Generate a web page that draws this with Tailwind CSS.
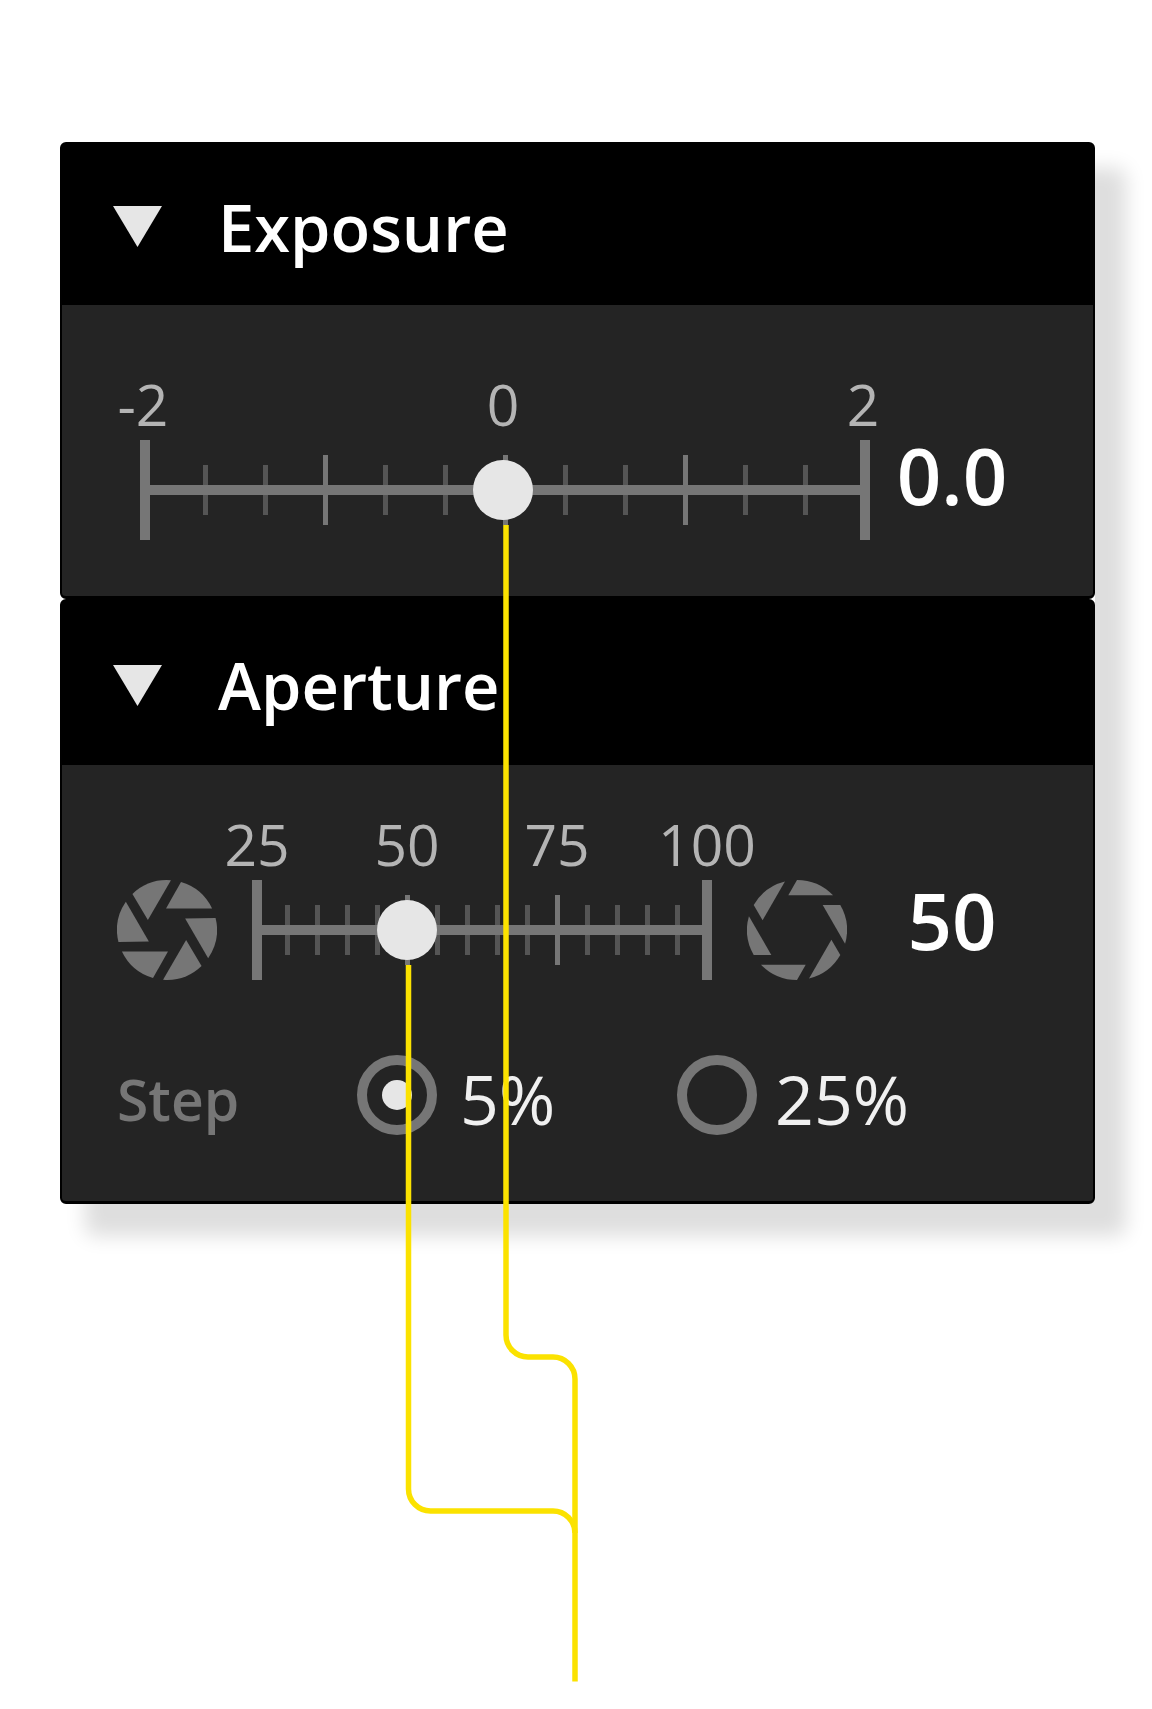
<!DOCTYPE html>
<html lang="en">
<head>
  <meta charset="UTF-8" />
  <title>Exposure and Aperture</title>
  <meta name="viewport" content="width=device-width, initial-scale=1.0">
  <script src="https://cdn.jsdelivr.net/npm/@tailwindcss/browser@4"></script>
</head>
<body class="bg-white font-['Open_Sans','Noto_Sans',sans-serif]">
  <main class="relative min-h-[1709px] pt-[142px] pl-[60px] pr-[57px]">

    <div class="rounded-md shadow-[28px_29px_20px_3px_#dedede]">

      <!-- Exposure -->
      <section class="border-2 border-b-3 border-black rounded-md bg-[#242424]">
        <h2>
          <button type="button" aria-expanded="true" class="flex items-center gap-[56px] w-full h-[161px] pt-1 pl-[51px] bg-black text-white text-[65px] leading-[80px] font-semibold">
            <svg class="w-[49px] h-[41px]" viewBox="0 0 49 41" aria-hidden="true"><path d="M0 0H49L24.500 41Z" fill="#e6e6e6"/></svg>
            Exposure
          </button>
        </h2>
        <div class="flex items-end gap-6 pt-[67px] pb-[56px] pl-[78px] pr-[83px]">
          <div class="flex-1">
            <div class="flex justify-between mb-1 mr-1 text-[57px] leading-[64px] text-[#b4b4b4]">
              <span class="w-1.5 flex justify-center">-2</span>
              <span class="w-1.5 flex justify-center">0</span>
              <span class="w-1.5 flex justify-center">2</span>
            </div>
            <div class="relative h-[100px]">
              <div id="exposure-ticks" class="flex items-center justify-between h-full"></div>
              <div class="absolute inset-x-0 top-[45px] h-[10px] bg-[#767676]"></div>
              <input id="exposure" type="range" min="-2" max="2" step="any" value="0" aria-label="Exposure" class="absolute inset-y-0 -left-[27px] w-[calc(100%+50px)] h-full appearance-none bg-transparent outline-none [&::-webkit-slider-thumb]:appearance-none [&::-webkit-slider-thumb]:size-[60px] [&::-webkit-slider-thumb]:rounded-full [&::-webkit-slider-thumb]:bg-[#e6e6e6]" />
            </div>
          </div>
          <output id="exposure-value" for="exposure" class="w-[116px] text-center text-[78px] leading-[130px] font-semibold text-white">0.0</output>
        </div>
      </section>

      <!-- Aperture -->
      <section class="border-2 border-b-3 border-black rounded-md bg-[#242424]">
        <h2>
          <button type="button" aria-expanded="true" class="flex items-center gap-[56px] w-full h-[164px] pt-1 pl-[51px] bg-black text-white text-[65px] leading-[80px] font-semibold">
            <svg class="w-[49px] h-[41px]" viewBox="0 0 49 41" aria-hidden="true"><path d="M0 0H49L24.500 41Z" fill="#e6e6e6"/></svg>
            Aperture
          </button>
        </h2>
        <div class="flex items-end pt-[47px] pl-[55px] pr-[83px]">
          <svg class="size-[100px] mr-[35px] fill-[#767676]" viewBox="-50 -50 100 100" aria-hidden="true">
            <path id="blade-closed" d="M14 -48A50 50 0 0 1 45.100 -21.500H-1Z"/>
            <use href="#blade-closed" transform="rotate(60)"/>
            <use href="#blade-closed" transform="rotate(120)"/>
            <use href="#blade-closed" transform="rotate(180)"/>
            <use href="#blade-closed" transform="rotate(240)"/>
            <use href="#blade-closed" transform="rotate(300)"/>
          </svg>
          <div class="flex-1">
            <div class="flex justify-between mb-1 text-[57px] leading-[64px] text-[#b4b4b4]">
              <span class="w-2.5 flex justify-center">25</span>
              <span class="w-2.5 flex justify-center">50</span>
              <span class="w-2.5 flex justify-center">75</span>
              <span class="w-2.5 flex justify-center">100</span>
            </div>
            <div class="relative h-[100px]">
              <div id="aperture-ticks" class="flex items-center justify-between h-full"></div>
              <div class="absolute inset-x-0 top-[45px] h-[10px] bg-[#767676]"></div>
              <input id="aperture" type="range" min="25" max="100" step="5" value="50" aria-label="Aperture" class="absolute inset-y-0 -left-[25px] w-[calc(100%+50px)] h-full appearance-none bg-transparent outline-none [&::-webkit-slider-thumb]:appearance-none [&::-webkit-slider-thumb]:size-[60px] [&::-webkit-slider-thumb]:rounded-full [&::-webkit-slider-thumb]:bg-[#e6e6e6]" />
            </div>
          </div>
          <svg class="size-[100px] ml-[35px] mr-[47px] fill-[#767676]" viewBox="-50 -50 100 100" aria-hidden="true">
            <path id="blade-open" d="M0 -50A50 50 0 0 1 36 -34.700H-8.700Z"/>
            <use href="#blade-open" transform="rotate(60)"/>
            <use href="#blade-open" transform="rotate(120)"/>
            <use href="#blade-open" transform="rotate(180)"/>
            <use href="#blade-open" transform="rotate(240)"/>
            <use href="#blade-open" transform="rotate(300)"/>
          </svg>
          <output id="aperture-value" for="aperture" class="w-[116px] text-center text-[78px] leading-[120px] font-semibold text-white">50</output>
        </div>

        <fieldset class="flex items-center pt-[71px] pb-[62px] pl-[55px] text-[68px] leading-[80px] text-[#f0f0f0]" aria-labelledby="step-label">
          <span id="step-label" class="w-[240px] pt-2 text-[57px] font-semibold text-[#767676]">Step</span>
          <label class="flex items-center gap-[23px] w-[320px]">
            <input type="radio" name="step" value="5" checked class="appearance-none grid place-items-center size-[80px] rounded-full border-[10px] border-[#767676] checked:before:content-[''] checked:before:size-[30px] checked:before:rounded-full checked:before:bg-[#e6e6e6]" />
            <span class="pt-2">5%</span>
          </label>
          <label class="flex items-center gap-[18px]">
            <input type="radio" name="step" value="25" class="appearance-none grid place-items-center size-[80px] rounded-full border-[10px] border-[#767676] checked:before:content-[''] checked:before:size-[30px] checked:before:rounded-full checked:before:bg-[#e6e6e6]" />
            <span class="pt-2">25%</span>
          </label>
        </fieldset>
      </section>
    </div>

    <!-- Callout lines from both thumbs -->
    <svg class="absolute top-0 left-0 w-[1152px] h-[1709px] pointer-events-none" viewBox="0 0 1152 1709" fill="none" stroke="#fbe200" stroke-width="5.500" aria-hidden="true">
      <path d="M506 525V1335A22 22 0 0 0 528 1357H553A22 22 0 0 1 575 1379V1681.500"/>
      <path d="M408.500 965V1489A22 22 0 0 0 430.500 1511H553A22 22 0 0 1 575 1533"/>
    </svg>
  </main>

  <script>
    // count = number of intervals, every "major" interval gets a longer tick
    function drawTicks(id, count, major) {
      const row = document.getElementById(id);
      for (let i = 0; i <= count; i++) {
        const cell = document.createElement("span");
        const tick = document.createElement("span");
        cell.className = "flex items-center justify-center w-2.5 h-full";
        if (i === 0 || i === count) {
          tick.className = "w-2.5 h-[100px] bg-[#767676]";
        } else if (i % major === 0) {
          tick.className = "w-[5px] h-[70px] bg-[#767676]";
        } else {
          tick.className = "w-[5px] h-[50px] bg-[#555555]";
        }
        cell.appendChild(tick);
        row.appendChild(cell);
      }
    }

    drawTicks("exposure-ticks", 12, 3);
    drawTicks("aperture-ticks", 15, 5);

    const exposure = document.getElementById("exposure");
    exposure.addEventListener("input", () => {
      document.getElementById("exposure-value").textContent = Number(exposure.value).toFixed(1);
    });

    const aperture = document.getElementById("aperture");
    aperture.addEventListener("input", () => {
      document.getElementById("aperture-value").textContent = aperture.value;
    });

    document.querySelectorAll("input[name=step]").forEach((radio) => {
      radio.addEventListener("change", () => {
        aperture.step = radio.value;
      });
    });
  </script>
</body>
</html>
